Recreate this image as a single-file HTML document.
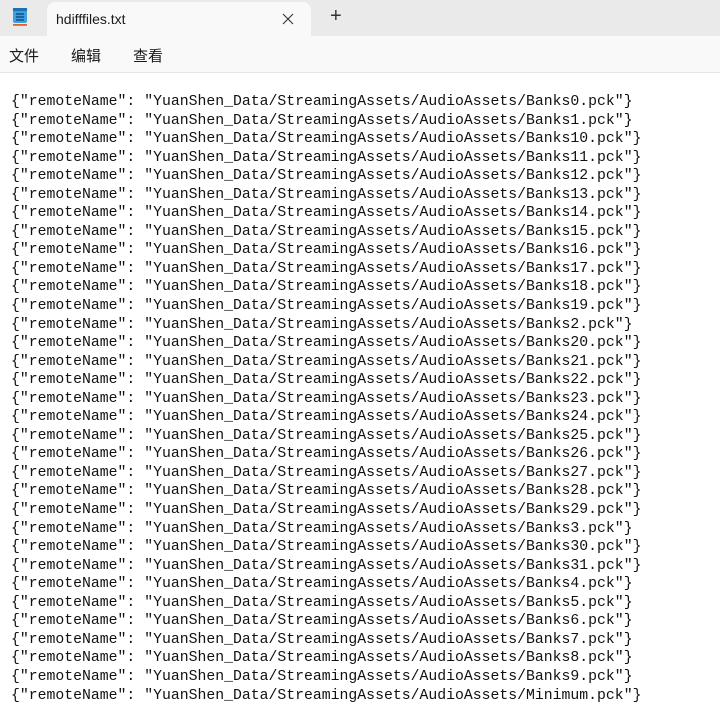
<!DOCTYPE html>
<html><head><meta charset="utf-8"><style>
body{margin:0;width:720px;height:692px;overflow:hidden;background:#fff;font-family:"Liberation Sans","Noto Sans CJK SC",sans-serif;position:relative}
.tabbar{position:absolute;left:0;top:0;width:720px;height:36px;background:#eaeaea}
.tab{position:absolute;left:47px;top:2px;width:264px;height:34px;background:#f9f9f9;border-radius:8px 8px 0 0}
.tab .t{position:absolute;left:9px;top:9px;font-size:14px;color:#1a1a1a}
.plus{position:absolute;left:330px;top:5px;font-size:20px;color:#333}
.menu{position:absolute;left:0;top:36px;width:720px;height:36px;background:#f9f9f9;border-bottom:1px solid #e5e5e5}
.menu span{position:absolute;top:9px;font-size:15px;color:#1a1a1a}
pre{position:absolute;left:11px;top:93px;margin:0;font-family:"Liberation Mono",monospace;font-size:14.8px;line-height:18.55px;color:#111}
</style></head><body>
<div class="tabbar">
<svg style="position:absolute;left:12px;top:7px" width="16" height="20" viewBox="0 0 16 20"><rect x="1" y="1" width="14" height="15" rx="2" fill="#3aa0e0"/><rect x="1" y="1" width="14" height="3" fill="#1f6fb3"/><g stroke="#0b3d6b" stroke-width="1.2"><line x1="4" y1="7" x2="12" y2="7"/><line x1="4" y1="10" x2="12" y2="10"/><line x1="4" y1="13" x2="12" y2="13"/></g><rect x="1" y="17" width="14" height="1.8" fill="#e0622b"/></svg>
<div class="tab"><span class="t">hdifffiles.txt</span>
<svg style="position:absolute;left:235px;top:11px" width="12" height="12" viewBox="0 0 12 12"><path d="M1 1L11 11M11 1L1 11" stroke="#333" stroke-width="1.1"/></svg></div>
<span class="plus">+</span>
</div>
<div class="menu"><span style="left:9px">文件</span><span style="left:71px">编辑</span><span style="left:133px">查看</span></div>
<pre>{"remoteName": "YuanShen_Data/StreamingAssets/AudioAssets/Banks0.pck"}
{"remoteName": "YuanShen_Data/StreamingAssets/AudioAssets/Banks1.pck"}
{"remoteName": "YuanShen_Data/StreamingAssets/AudioAssets/Banks10.pck"}
{"remoteName": "YuanShen_Data/StreamingAssets/AudioAssets/Banks11.pck"}
{"remoteName": "YuanShen_Data/StreamingAssets/AudioAssets/Banks12.pck"}
{"remoteName": "YuanShen_Data/StreamingAssets/AudioAssets/Banks13.pck"}
{"remoteName": "YuanShen_Data/StreamingAssets/AudioAssets/Banks14.pck"}
{"remoteName": "YuanShen_Data/StreamingAssets/AudioAssets/Banks15.pck"}
{"remoteName": "YuanShen_Data/StreamingAssets/AudioAssets/Banks16.pck"}
{"remoteName": "YuanShen_Data/StreamingAssets/AudioAssets/Banks17.pck"}
{"remoteName": "YuanShen_Data/StreamingAssets/AudioAssets/Banks18.pck"}
{"remoteName": "YuanShen_Data/StreamingAssets/AudioAssets/Banks19.pck"}
{"remoteName": "YuanShen_Data/StreamingAssets/AudioAssets/Banks2.pck"}
{"remoteName": "YuanShen_Data/StreamingAssets/AudioAssets/Banks20.pck"}
{"remoteName": "YuanShen_Data/StreamingAssets/AudioAssets/Banks21.pck"}
{"remoteName": "YuanShen_Data/StreamingAssets/AudioAssets/Banks22.pck"}
{"remoteName": "YuanShen_Data/StreamingAssets/AudioAssets/Banks23.pck"}
{"remoteName": "YuanShen_Data/StreamingAssets/AudioAssets/Banks24.pck"}
{"remoteName": "YuanShen_Data/StreamingAssets/AudioAssets/Banks25.pck"}
{"remoteName": "YuanShen_Data/StreamingAssets/AudioAssets/Banks26.pck"}
{"remoteName": "YuanShen_Data/StreamingAssets/AudioAssets/Banks27.pck"}
{"remoteName": "YuanShen_Data/StreamingAssets/AudioAssets/Banks28.pck"}
{"remoteName": "YuanShen_Data/StreamingAssets/AudioAssets/Banks29.pck"}
{"remoteName": "YuanShen_Data/StreamingAssets/AudioAssets/Banks3.pck"}
{"remoteName": "YuanShen_Data/StreamingAssets/AudioAssets/Banks30.pck"}
{"remoteName": "YuanShen_Data/StreamingAssets/AudioAssets/Banks31.pck"}
{"remoteName": "YuanShen_Data/StreamingAssets/AudioAssets/Banks4.pck"}
{"remoteName": "YuanShen_Data/StreamingAssets/AudioAssets/Banks5.pck"}
{"remoteName": "YuanShen_Data/StreamingAssets/AudioAssets/Banks6.pck"}
{"remoteName": "YuanShen_Data/StreamingAssets/AudioAssets/Banks7.pck"}
{"remoteName": "YuanShen_Data/StreamingAssets/AudioAssets/Banks8.pck"}
{"remoteName": "YuanShen_Data/StreamingAssets/AudioAssets/Banks9.pck"}
{"remoteName": "YuanShen_Data/StreamingAssets/AudioAssets/Minimum.pck"}</pre>
</body></html>
